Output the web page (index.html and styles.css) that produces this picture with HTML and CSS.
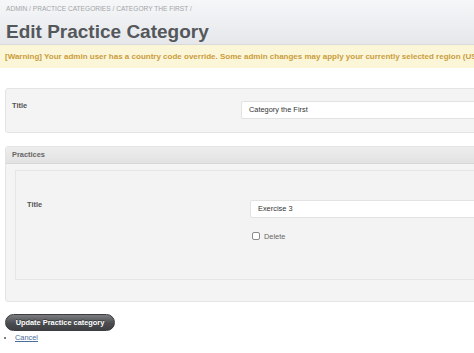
FILE: index.html
```html
<!DOCTYPE html>
<html>
<head>
<meta charset="utf-8">
<link rel="stylesheet" href="styles.css">
</head>
<body>
<div class="page">
  <header class="header">
    <div class="crumbs">ADMIN / PRACTICE CATEGORIES / CATEGORY THE FIRST /</div>
    <h1 class="title">Edit Practice Category</h1>
  </header>
  <div class="warning">[Warning] Your admin user has a country code override. Some admin changes may apply your currently selected region (US)</div>
  <main class="main">
    <section class="panel panel-title">
      <div class="row">
        <label class="label">Title</label>
        <div class="field"><div class="input">Category the First</div></div>
      </div>
    </section>
    <section class="panel panel-practices">
      <div class="panel-head">Practices</div>
      <div class="inner">
        <div class="row row-inner">
          <label class="label label-inner">Title</label>
          <div class="field">
            <div class="input">Exercise 3</div>
            <div class="check-row"><span class="checkbox"></span><span class="check-label">Delete</span></div>
          </div>
        </div>
      </div>
    </section>
    <button class="btn">Update Practice category</button>
    <ul class="links"><li><a class="link" href="#">Cancel</a></li></ul>
  </main>
</div>
</body>
</html>
```
FILE: styles.css
```css
html, body {
  margin: 0;
  padding: 0;
  overflow: hidden;
  background: #fff;
}
body {
  font-family: "Liberation Sans", Arial, sans-serif;
  font-size: 7.4px;
  color: #555;
}
.page {
  width: 520px;
}
.header {
  height: 45px;
  box-sizing: border-box;
  padding: 5px 6px 0;
  background: linear-gradient(#f6f7f9, #e5e7ea);
  border-bottom: 1px solid #d9d9d9;
}
.crumbs {
  font-size: 6.6px;
  line-height: 7px;
  color: #a3a5a8;
}
.title {
  margin: 9px 0 0;
  font-size: 19px;
  line-height: 22px;
  font-weight: bold;
  color: #54575b;
}
.warning {
  height: 23px;
  line-height: 23px;
  padding-left: 5px;
  background: #fcf6d9;
  color: #c99d3c;
  font-weight: bold;
  font-size: 8px;
  white-space: nowrap;
}
.main {
  padding: 20px 0 0 5px;
}
.panel {
  background: #f4f4f4;
  border: 1px solid #e4e4e4;
  border-radius: 3px;
}
.panel-title {
  padding: 12px 0 13px;
}
.row {
  display: flex;
  align-items: flex-start;
  padding-left: 6px;
}
.label {
  width: 229px;
  flex: none;
  font-weight: bold;
  line-height: 10px;
  color: #555;
}
.input {
  width: 260px;
  height: 18px;
  box-sizing: border-box;
  background: #fff;
  border: 1px solid #e2e2e2;
  border-radius: 2px;
  padding-left: 7px;
  line-height: 16px;
  color: #333;
}
.panel-practices {
  margin-top: 13px;
  padding-bottom: 21px;
}
.panel-head {
  height: 17px;
  box-sizing: border-box;
  line-height: 16px;
  padding-left: 6px;
  font-weight: bold;
  color: #666;
  background: linear-gradient(#ededed, #e2e2e2);
  border-bottom: 1px solid #d6d6d6;
  border-radius: 3px 3px 0 0;
}
.inner {
  margin: 6px 0 0 9px;
  height: 110px;
  box-sizing: border-box;
  background: #f3f3f3;
  border: 1px solid #e6e6e6;
  padding-top: 29px;
}
.row-inner {
  padding-left: 11px;
}
.label-inner {
  width: 223px;
}
.check-row {
  display: flex;
  align-items: center;
  margin: 13px 0 0 2px;
  height: 10px;
}
.checkbox {
  width: 8px;
  height: 8px;
  box-sizing: border-box;
  border: 1px solid #8c8c8c;
  border-radius: 2px;
  background: #fff;
}
.check-label {
  margin-left: 4px;
  color: #666;
}
.btn {
  display: block;
  margin-top: 12px;
  width: 110px;
  height: 17px;
  padding: 0;
  border: 1px solid #3a3c3f;
  border-radius: 9px;
  background: linear-gradient(#7a7c80, #4a4c50 55%, #3d3f42);
  color: #fff;
  font-family: "Liberation Sans", Arial, sans-serif;
  font-size: 7.4px;
  font-weight: bold;
  text-shadow: 0 -1px 0 rgba(0,0,0,0.4);
}
.links {
  margin: 2px 0 0;
  padding-left: 10px;
  line-height: 9px;
}
.link {
  color: #4a6d9a;
  text-decoration: underline;
}
```
